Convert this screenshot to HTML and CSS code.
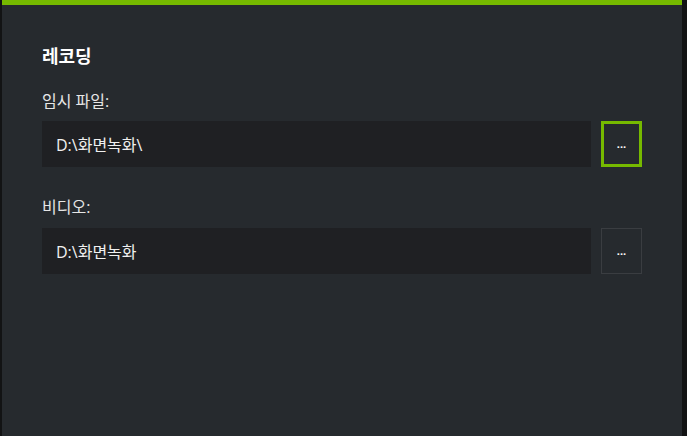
FILE: index.html
```html
<!DOCTYPE html>
<html lang="ko">
<head>
    <meta charset="UTF-8">
    <meta name="viewport" content="width=device-width, initial-scale=1.0">
    <title>레코딩</title>
    <link rel="stylesheet" href="styles.css">
</head>
<body>

<div class="dialog">
    <h2 class="title">레코딩</h2>

    <!-- 임시 파일 -->
    <label class="field-label" for="tempPath">임시 파일:</label>
    <div class="path-row">
        <input type="text" id="tempPath" class="path-input" value="D:\화면녹화\" readonly>
        <button class="browse-btn active">...</button>
    </div>

    <!-- 비디오 -->
    <label class="field-label second" for="videoPath">비디오:</label>
    <div class="path-row">
        <input type="text" id="videoPath" class="path-input" value="D:\화면녹화" readonly>
        <button class="browse-btn">...</button>
    </div>
</div>

</body>
</html>
```

FILE: styles.css
```css
html, body {
    margin: 0;
    height: 100%;
}
body {
    background-color: #121314; /* 뒤쪽 배경 */
    font-family: "Open Sans", "Noto Sans CJK KR", sans-serif;
    color: #e8e8e8;
    overflow: hidden;
}
.dialog {
    box-sizing: border-box;
    width: 680px;
    height: 436px;
    margin-left: 2px;
    padding: 0 40px;
    background-color: #262a2e;
    border-top: 5px solid #76b900; /* 초록 상단 바 */
}
.title {
    margin: 39px 0 0;
    font-size: 18px;
    line-height: 24px;
    font-weight: bold;
    color: #ffffff;
}
.field-label {
    display: block;
    margin: 23px 0 10px;
    font-size: 16px;
    line-height: 20px;
    color: #e6e6e6;
}
.field-label.second {
    margin-top: 30px;
    margin-bottom: 11px;
}
.path-row {
    display: flex;
    gap: 10px;
    height: 46px;
}
.path-input {
    flex: 1;
    min-width: 0;
    box-sizing: border-box;
    height: 46px;
    padding: 0 14px;
    border: none;
    outline: none;
    background-color: #1f2023;
    font-family: "Open Sans", "Noto Sans CJK KR", sans-serif;
    font-size: 16px;
    color: #f0f0f0;
}
.browse-btn {
    box-sizing: border-box;
    width: 41px;
    height: 46px;
    padding: 0 0 2px;
    border: 1px solid #3a3d41;
    background-color: #262a2e;
    color: #ffffff;
    font-family: "Open Sans", sans-serif;
    font-size: 11px;
    font-weight: bold;
    cursor: pointer;
}
.browse-btn.active {
    border: 3px solid #76b900; /* 포커스 테두리 */
}
```
